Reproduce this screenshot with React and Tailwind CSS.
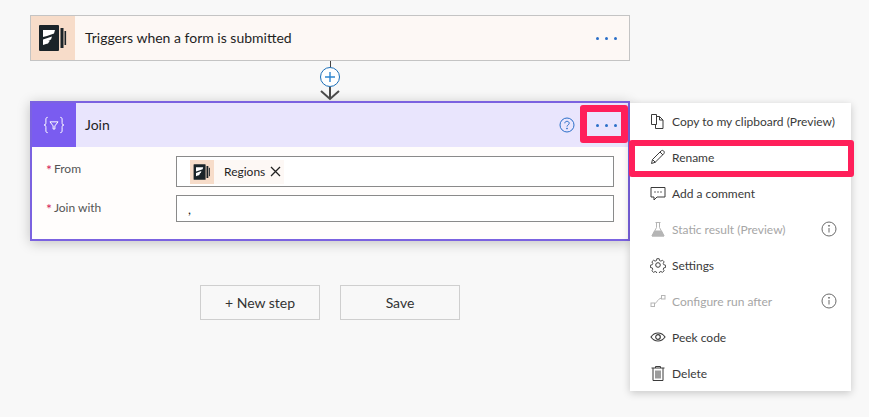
function FormLogo({ size = 30 }) {
  return (
    <svg width={size} height={size} viewBox="0 0 30 30">
      <rect x="1" y="2" width="20" height="26" rx="1" fill="#1a2328" />
      <rect x="22.500" y="5" width="3" height="20" fill="#1a2328" />
      <rect x="26.500" y="8" width="1.600" height="14" fill="#1a2328" />
      <path d="M5 7h12l-1 3.500-7 2.500-4 1z" fill="#fff" />
      <path d="M5 16.500l9-3-1 3-3 1.200 2-.2-2 3-2 .5-3 1z" fill="#fff" />
    </svg>
  );
}

function MenuIcon({ name, muted }) {
  const color = muted ? '#b5b5b5' : '#3b3b3b';
  const props = { width: 16, height: 16, viewBox: '0 0 16 16', fill: 'none', stroke: color, strokeWidth: 1, className: 'shrink-0' };
  if (name === 'copy') return (
    <svg {...props}>
      <path d="M1.500 1.500h5v10h-5z" />
      <path d="M6.500 3.500h3l3.500 3.500v8.500h-7.500v-4" />
      <path d="M9.500 3.500v3.500h3.500" />
    </svg>
  );
  if (name === 'rename') return (
    <svg {...props}>
      <path d="M1.500 14.500l1-4 8.500-8.500c.8-.8 2-.8 2.700 0 .8.800.8 2 0 2.800l-8.500 8.500z" />
      <path d="M10 3l3 3M2.500 10.500l3 3" />
    </svg>
  );
  if (name === 'comment') return (
    <svg {...props}>
      <path d="M1 2.500h14v9.500h-8l-3 3v-3h-3z" />
      <path d="M4.500 7h1M7.500 7h1M10.500 7h1" strokeWidth="1.500" />
    </svg>
  );
  if (name === 'flask') return (
    <svg {...props}>
      <path d="M5.500 1.500h5M6.500 1.500v5l-4.500 8.500h12l-4.500-8.500v-5" />
      <path d="M4.500 10h7l2.500 5h-12z" fill={color} />
    </svg>
  );
  if (name === 'settings') return (
    <svg {...props}>
      <path d="M6.700 1h2.600l.4 2 1.500.7 1.800-1 1.800 1.800-1 1.800.6 1.400 2 .5v2.600l-2 .4-.6 1.500 1 1.700-1.800 1.800-1.800-1-1.500.6-.4 2h-2.600l-.4-2-1.500-.6-1.700 1-1.900-1.800 1-1.700-.6-1.500-2-.4v-2.600l2-.5.6-1.400-1-1.800 1.900-1.800 1.700 1 1.500-.7z" transform="translate(.8 .8) scale(.9)" />
      <circle cx="8" cy="8" r="2.300" />
    </svg>
  );
  if (name === 'run') return (
    <svg {...props}>
      <rect x="1" y="10" width="3.500" height="3.500" />
      <rect x="11.500" y="2.500" width="3.500" height="3.500" />
      <path d="M4.500 10.500c3-.5 2-4 7-5.500" />
    </svg>
  );
  if (name === 'eye') return (
    <svg {...props}>
      <path d="M1 8c2-3 4.300-4 7-4s5 1 7 4c-2 3-4.300 4-7 4s-5-1-7-4z" strokeWidth="1.200" />
      <circle cx="8" cy="8" r="2.300" strokeWidth="1.200" />
    </svg>
  );
  return (
    <svg {...props}>
      <path d="M1.500 3h13M5.500 3v-1.500h5v1.500M3 3v12.500h10v-12.500" />
      <path d="M6 5.500v8M8 5.500v8M10 5.500v8" />
    </svg>
  );
}

function InfoIcon() {
  return (
    <svg width="16" height="16" viewBox="0 0 16 16" fill="none" stroke="#6b6b6b">
      <circle cx="8" cy="8" r="7" />
      <path d="M8 7v4.500" />
      <circle cx="8" cy="4.800" r=".5" fill="#6b6b6b" />
    </svg>
  );
}

const items = [
  { icon: 'copy', label: 'Copy to my clipboard (Preview)' },
  { icon: 'rename', label: 'Rename' },
  { icon: 'comment', label: 'Add a comment' },
  { icon: 'flask', label: 'Static result (Preview)', muted: true, info: true },
  { icon: 'settings', label: 'Settings' },
  { icon: 'run', label: 'Configure run after', muted: true, info: true },
  { icon: 'eye', label: 'Peek code' },
  { icon: 'trash', label: 'Delete' },
];

function Dots() {
  return (
    <div className="flex gap-[6px]">
      <span className="w-[3px] h-[3px] rounded-full bg-[#2b6fc9]" />
      <span className="w-[3px] h-[3px] rounded-full bg-[#2b6fc9]" />
      <span className="w-[3px] h-[3px] rounded-full bg-[#2b6fc9]" />
    </div>
  );
}

function App() {
  return (
    <div className="relative w-[869px] h-[417px] overflow-hidden bg-[#f8f8f8] pl-[30px] pt-[15px] font-['Lato',sans-serif] text-[#1f1f1f]">
      <div className="w-[600px]">
        {/* Trigger */}
        <div className="h-[46px] flex items-center border border-[#c4c4c4] bg-[#fdf8f5]">
          <div className="w-[44px] h-full flex items-center justify-center bg-[#f7dcc9]">
            <FormLogo />
          </div>
          <span className="ml-[10px] mb-[2px] text-[14px]">Triggers when a form is submitted</span>
          <div className="ml-auto mr-[12px]"><Dots /></div>
        </div>

        {/* Connector */}
        <div className="relative h-[40px] flex flex-col items-center">
          <div className="w-px h-[6px] bg-[#444]" />
          <div className="w-[20px] h-[20px] rounded-full border border-[#1c6fb8] bg-white flex items-center justify-center text-[#2f86d0]">
            <svg width="12" height="12" viewBox="0 0 12 12" stroke="currentColor" strokeWidth="1.400"><path d="M6 1v10M1 6h10" /></svg>
          </div>
          <svg width="22" height="14" viewBox="0 0 22 14" fill="none" stroke="#4a4a4a" strokeWidth="2">
            <path d="M11 0v12M2 4l9 8 9-8" />
          </svg>
        </div>

        {/* Join */}
        <div className="h-[140px] border-2 border-[#7b62e0] bg-[#fffdfc] shadow-[0_2px_12px_rgba(0,0,0,0.22)]">
          <div className="h-[44px] flex items-center bg-[#e9e5fd]">
            <div className="w-[44px] h-full flex items-center justify-center bg-[#7a5cf0] text-white">
              <svg width="22" height="18" viewBox="0 0 24 20" fill="none" stroke="#fff" strokeWidth="1.100">
                <path d="M5 1.500c-2 0-2 1-2 3v3c0 1.500-.5 2.500-2 2.500 1.500 0 2 1 2 2.500v3c0 2 0 3 2 3" />
                <path d="M19 1.500c2 0 2 1 2 3v3c0 1.500.5 2.500 2 2.500-1.500 0-2 1-2 2.500v3c0 2 0 3-2 3" />
                <path d="M7.500 6.500h9l-3.500 4.500v3.500h-2v-3.500z" />
              </svg>
            </div>
            <span className="ml-[9px] mb-[2px] text-[14px]">Join</span>
            <svg className="ml-auto mr-[21px]" width="16" height="16" viewBox="0 0 16 16" fill="none" stroke="#2b6fc9">
              <circle cx="8" cy="8" r="7" />
              <path d="M5.800 6.300c0-1.300 1-2 2.200-2s2.200.8 2.200 2c0 1.600-2.200 1.700-2.200 3.300" />
              <circle cx="8" cy="11.500" r=".5" />
            </svg>
            <div className="mr-[11px]"><Dots /></div>
          </div>
          <div className="pl-[14px] pr-[14px] pt-[9px]">
            <div className="flex">
              <div className="w-[130px] flex items-start text-[12px] leading-[16px] text-[#555] pt-[5px]">
                <span className="text-[#d6245a] text-[14px] leading-[18px] mr-[2px]">*</span>From
              </div>
              <div className="flex-1 h-[31px] border border-[#8a8a8a] bg-white flex items-center pl-[13px]">
                <div className="h-[24px] flex items-center bg-[#fdf8f5] pr-[3px]">
                  <div className="w-[24px] h-full flex items-center justify-center bg-[#f7dcc9]">
                    <FormLogo size={18} />
                  </div>
                  <span className="ml-[10px] text-[12px]">Regions</span>
                  <svg className="ml-[5px]" width="11" height="11" viewBox="0 0 11 11" stroke="#222" strokeWidth="1.300"><path d="M1 1l9 9M10 1l-9 9" /></svg>
                </div>
              </div>
            </div>
            <div className="flex mt-[8px]">
              <div className="w-[130px] flex items-start text-[12px] leading-[16px] text-[#555] pt-[5px]">
                <span className="text-[#d6245a] text-[14px] leading-[18px] mr-[2px]">*</span>Join with
              </div>
              <div className="flex-1 h-[27px] border border-[#8a8a8a] bg-white pl-[11px] text-[13px] leading-[27px]">,</div>
            </div>
          </div>
        </div>

        {/* Buttons */}
        <div className="mt-[44px] flex justify-center gap-[20px]">
          <button className="w-[120px] h-[35px] border border-[#cfcfcf] bg-[#f8f8f8] text-[14px] text-[#333]">+ New step</button>
          <button className="w-[120px] h-[35px] border border-[#cfcfcf] bg-[#f8f8f8] text-[14px] text-[#333]">Save</button>
        </div>
      </div>

      {/* Menu */}
      <div className="absolute left-[630px] top-[103px] w-[221px] bg-white shadow-[0_2px_8px_rgba(0,0,0,0.2)]">
        {items.map(item => (
          <div key={item.label} className={`h-[36px] flex items-center pl-[20px] pr-[14px] text-[12px] ${item.muted ? 'text-[#a6a6a6]' : 'text-[#3a3a3a]'}`}>
            <MenuIcon name={item.icon} muted={item.muted} />
            <span className="ml-[6px] mt-[2px] whitespace-nowrap">{item.label}</span>
            {item.info && <span className="ml-auto"><InfoIcon /></span>}
          </div>
        ))}
      </div>

      {/* Callouts */}
      <div className="absolute left-[580px] top-[105px] w-[48px] h-[38px] border-[7px] border-[#ff1f5a] rounded-[3px]" />
      <div className="absolute left-[629px] top-[140px] w-[225px] h-[37px] border-[6px] border-[#ff1f5a] rounded-[3px]" />
    </div>
  );
}

export default App;
